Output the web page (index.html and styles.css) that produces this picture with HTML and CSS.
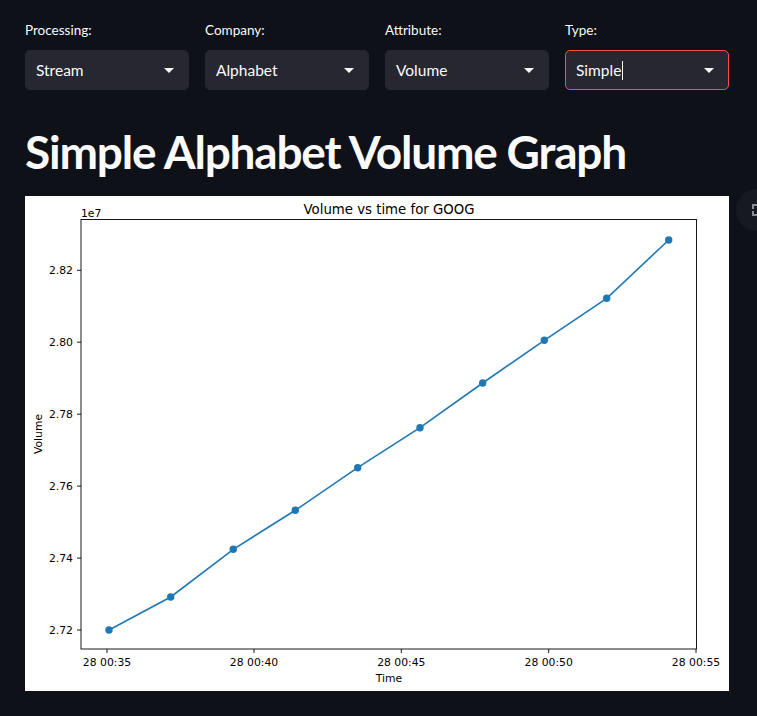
FILE: index.html
```html
<!DOCTYPE html>
<html lang="en">
<head>
    <meta charset="UTF-8">
    <title>Stock Graph</title>
    <link rel="stylesheet" href="styles.css">
</head>
<body>
    <div class="main">
        <!-- 筛选条件 -->
        <div class="filters">
            <div class="filter">
                <div class="filter-label">Processing:</div>
                <div class="select">
                    <span class="select-value">Stream</span>
                    <span class="caret"></span>
                </div>
            </div>
            <div class="filter">
                <div class="filter-label">Company:</div>
                <div class="select">
                    <span class="select-value">Alphabet</span>
                    <span class="caret"></span>
                </div>
            </div>
            <div class="filter">
                <div class="filter-label">Attribute:</div>
                <div class="select">
                    <span class="select-value">Volume</span>
                    <span class="caret"></span>
                </div>
            </div>
            <div class="filter">
                <div class="filter-label">Type:</div>
                <div class="select select-focused">
                    <span class="select-value">Simple<span class="text-cursor"></span></span>
                    <span class="caret"></span>
                </div>
            </div>
        </div>

        <h1 class="page-title">Simple Alphabet Volume Graph</h1>

        <!-- 图表 -->
        <div class="chart-wrap">
            <svg class="chart" width="704" height="495" viewBox="25 195 704 495">
                <rect x="25" y="195" width="704" height="495" fill="#ffffff"/>
                <text x="389" y="213" class="chart-title" text-anchor="middle">Volume vs time for GOOG</text>
                <text x="81" y="216" class="tick-text">1e7</text>

                <!-- y ticks -->
                <g stroke="#000" stroke-width="0.9">
                    <line x1="77" y1="269.3" x2="81" y2="269.3"/>
                    <line x1="77" y1="341.2" x2="81" y2="341.2"/>
                    <line x1="77" y1="413.2" x2="81" y2="413.2"/>
                    <line x1="77" y1="485.1" x2="81" y2="485.1"/>
                    <line x1="77" y1="557.1" x2="81" y2="557.1"/>
                    <line x1="77" y1="629" x2="81" y2="629"/>
                </g>
                <g class="tick-text" text-anchor="end">
                    <text x="73" y="273.2">2.82</text>
                    <text x="73" y="345.1">2.80</text>
                    <text x="73" y="417.1">2.78</text>
                    <text x="73" y="489">2.76</text>
                    <text x="73" y="561">2.74</text>
                    <text x="73" y="632.9">2.72</text>
                </g>

                <!-- x ticks -->
                <g stroke="#000" stroke-width="0.9">
                    <line x1="107" y1="648" x2="107" y2="652"/>
                    <line x1="254" y1="648" x2="254" y2="652"/>
                    <line x1="401.3" y1="648" x2="401.3" y2="652"/>
                    <line x1="548.7" y1="648" x2="548.7" y2="652"/>
                    <line x1="696" y1="648" x2="696" y2="652"/>
                </g>
                <g class="tick-text" text-anchor="middle">
                    <text x="107" y="665">28 00:35</text>
                    <text x="254" y="665">28 00:40</text>
                    <text x="401.3" y="665">28 00:45</text>
                    <text x="548.7" y="665">28 00:50</text>
                    <text x="696" y="665">28 00:55</text>
                </g>
                <text x="389" y="681" class="tick-text" text-anchor="middle">Time</text>
                <text x="42" y="433" class="tick-text" text-anchor="middle" transform="rotate(-90 42 433)">Volume</text>

                <!-- 数据 -->
                <polyline fill="none" stroke="#1f77b4" stroke-width="1.6"
                    points="109,629 170.7,596 233.3,548.3 295.3,509.3 357.7,466.7 420,426.7 482.7,382 544.3,339.3 606.7,297.3 668.7,239"/>
                <g fill="#1f77b4">
                    <circle cx="109" cy="629" r="3.7"/>
                    <circle cx="170.7" cy="596" r="3.7"/>
                    <circle cx="233.3" cy="548.3" r="3.7"/>
                    <circle cx="295.3" cy="509.3" r="3.7"/>
                    <circle cx="357.7" cy="466.7" r="3.7"/>
                    <circle cx="420" cy="426.7" r="3.7"/>
                    <circle cx="482.7" cy="382" r="3.7"/>
                    <circle cx="544.3" cy="339.3" r="3.7"/>
                    <circle cx="606.7" cy="297.3" r="3.7"/>
                    <circle cx="668.7" cy="239" r="3.7"/>
                </g>

                <rect x="81" y="218.5" width="615.5" height="429.5" fill="none" stroke="#000" stroke-width="0.9"/>
            </svg>

            <button class="fullscreen-button" title="View fullscreen">
                <svg width="14" height="14" viewBox="0 0 14 14">
                    <path d="M1 1h5v2H3v3H1z M13 1v5h-2V3H8V1z M1 13V8h2v3h3v2z M13 13H8v-2h3V8h2z" fill="#8b8d94"/>
                </svg>
            </button>
        </div>
    </div>
</body>
</html>
```

FILE: styles.css
```css
html, body {
    margin: 0;
    padding: 0;
    background-color: #0e1117;
    overflow: hidden;
}

body {
    font-family: "Source Sans Pro", Lato, "Noto Sans", sans-serif;
    color: #fafafa;
}

.main {
    width: 704px;
    padding: 20px 0 0 25px;
}

/* 下拉框 */
.filters {
    display: flex;
    gap: 16px;
}

.filter {
    flex: 1;
}

.filter-label {
    font-size: 13.5px;
    line-height: 21px;
    height: 21px;
    margin-bottom: 9px;
    color: #fafafa;
}

.select {
    height: 40px;
    box-sizing: border-box;
    background-color: #262730;
    border: 1px solid #262730;
    border-radius: 5px;
    display: flex;
    align-items: center;
    justify-content: space-between;
    padding: 0 14px 0 10px;
}

.select-focused {
    border-color: #ff4b4b;
}

.select-value {
    font-size: 15.5px;
    display: flex;
    align-items: center;
}

.text-cursor {
    display: inline-block;
    width: 1px;
    height: 19px;
    margin-left: 1px;
    background-color: #fafafa;
}

.caret {
    width: 0;
    height: 0;
    border-left: 5px solid transparent;
    border-right: 5px solid transparent;
    border-top: 5px solid #fafafa;
}

.page-title {
    font-family: Lato, "Noto Sans", sans-serif;
    font-weight: 700;
    font-size: 46px;
    letter-spacing: -1.2px;
    line-height: 60px;
    margin: 32px 0 14px 0;
    color: #fafafa;
}

/* 图表 */
.chart-wrap {
    position: relative;
    width: 704px;
    height: 495px;
}

.chart {
    display: block;
}

.chart-title {
    font-family: "DejaVu Sans", sans-serif;
    font-size: 13.3px;
    fill: #000;
}

.tick-text {
    font-family: "DejaVu Sans", sans-serif;
    font-size: 10.8px;
    fill: #000;
}

.fullscreen-button {
    position: absolute;
    top: -7px;
    left: 711px;
    width: 42px;
    height: 42px;
    border: none;
    border-radius: 50%;
    background-color: #161922;
    padding: 0 0 0 15px;
    display: flex;
    align-items: center;
    cursor: pointer;
}
```
